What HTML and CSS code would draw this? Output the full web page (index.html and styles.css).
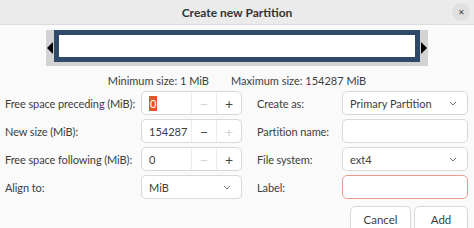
FILE: index.html
```html
<!DOCTYPE html>
<html>
<head>
  <meta charset="UTF-8">
  <title>Create new Partition</title>
  <link rel="stylesheet" href="styles.css">
</head>
<body>
  <div class="header">
    <span class="title">Create new Partition</span>
    <span class="close">&#x2715;</span>
  </div>

  <div class="bar">
    <span class="arrow left"></span>
    <div class="part"><div class="free"></div></div>
    <span class="arrow right"></span>
  </div>

  <p class="sizes"><span>Minimum size: 1 MiB</span><span>Maximum size: 154287 MiB</span></p>

  <div class="form">
    <label>Free space preceding (MiB):</label>
    <div class="spin">
      <span class="val"><span class="sel">0</span></span>
      <span class="btn off">&minus;</span>
      <span class="btn">+</span>
    </div>
    <label class="rl">Create as:</label>
    <div class="combo"><span>Primary Partition</span><svg class="chev" width="8" height="5" viewBox="0 0 8 5"><path d="M1 1l3 3 3-3" fill="none" stroke="#777" stroke-width="1"/></svg></div>

    <label>New size (MiB):</label>
    <div class="spin">
      <span class="val">154287</span>
      <span class="btn">&minus;</span>
      <span class="btn off">+</span>
    </div>
    <label class="rl">Partition name:</label>
    <div class="entry"></div>

    <label>Free space following (MiB):</label>
    <div class="spin">
      <span class="val">0</span>
      <span class="btn off">&minus;</span>
      <span class="btn">+</span>
    </div>
    <label class="rl">File system:</label>
    <div class="combo"><span>ext4</span><svg class="chev" width="8" height="5" viewBox="0 0 8 5"><path d="M1 1l3 3 3-3" fill="none" stroke="#777" stroke-width="1"/></svg></div>

    <label>Align to:</label>
    <div class="combo"><span>MiB</span><svg class="chev" width="8" height="5" viewBox="0 0 8 5"><path d="M1 1l3 3 3-3" fill="none" stroke="#777" stroke-width="1"/></svg></div>
    <label class="rl">Label:</label>
    <div class="entry bad"></div>
  </div>

  <div class="actions">
    <button>Cancel</button>
    <button>Add</button>
  </div>
</body>
</html>
```

FILE: styles.css
```css
body {
  margin: 0;
  background: #fafafa;
  color: #3d3d3d;
  font-family: Lato, "Liberation Sans", sans-serif;
  font-size: 11px;
  overflow: hidden;
}

.header {
  height: 24px;
  background: #ebebeb;
  border-bottom: 1px solid #dadada;
  display: flex;
  align-items: center;
  justify-content: center;
  position: relative;
}

.title {
  font-weight: bold;
  font-size: 12px;
  color: #333;
}

.close {
  position: absolute;
  right: 4px;
  top: 3px;
  width: 18px;
  height: 18px;
  border-radius: 50%;
  background: #e0e0e0;
  font-size: 8px;
  display: flex;
  align-items: center;
  justify-content: center;
  color: #444;
}

.bar {
  margin: 5px 0 0 46px;
  width: 382px;
  height: 36px;
  background: #d3d3d3;
  display: flex;
  align-items: flex-start;
  position: relative;
}

.part {
  margin-left: 8px;
  width: 366px;
  height: 32px;
  background: #2f4a68;
  padding: 5px;
  box-sizing: border-box;
}

.free {
  height: 100%;
  background: #fff;
}

.arrow {
  position: absolute;
  top: 12px;
  width: 0;
  height: 0;
  border-top: 6px solid transparent;
  border-bottom: 6px solid transparent;
}

.arrow.left {
  left: 1px;
  border-right: 6px solid #000;
}

.arrow.right {
  right: 1px;
  border-left: 6px solid #000;
}

.sizes {
  margin: 8px 0 0;
  height: 16px;
  display: flex;
  justify-content: center;
  gap: 22px;
  font-size: 11px;
}

.form {
  margin: 1px 0 0 5px;
  width: 463px;
  display: grid;
  grid-template-columns: 136px 101px 100px 126px;
  grid-auto-rows: 24px;
  row-gap: 4px;
  align-items: center;
}

.form label {
  white-space: nowrap;
  letter-spacing: -0.1px;
}

.form .rl {
  padding-left: 15px;
}

.spin,
.combo,
.entry {
  height: 24px;
  box-sizing: border-box;
  background: #fff;
  border: 1px solid #d8d8d8;
  border-radius: 5px;
  display: flex;
  align-items: center;
}

.spin .val {
  flex: 1;
  padding-left: 7px;
}

.sel {
  background: #e9542f;
  color: #fff;
  padding: 1px 1px;
}

.spin .btn {
  width: 24px;
  height: 100%;
  border-left: 1px solid #ececec;
  display: flex;
  align-items: center;
  justify-content: center;
  font-size: 14px;
  color: #444;
}

.spin .btn.off {
  color: #d4d4d4;
}

.combo {
  justify-content: space-between;
  padding: 0 10px 0 7px;
}

.entry.bad {
  border-color: #eb9c8c;
}

.actions {
  margin: 7px 6px 0 0;
  display: flex;
  justify-content: flex-end;
  gap: 3px;
}

.actions button {
  font-family: inherit;
  font-size: 11.5px;
  color: #3d3d3d;
  background: #fff;
  border: 1px solid #d8d8d8;
  border-radius: 5px;
  height: 30px;
  padding: 0 0 4px;
  width: 61px;
}

.actions button + button {
  width: 54px;
}
```
